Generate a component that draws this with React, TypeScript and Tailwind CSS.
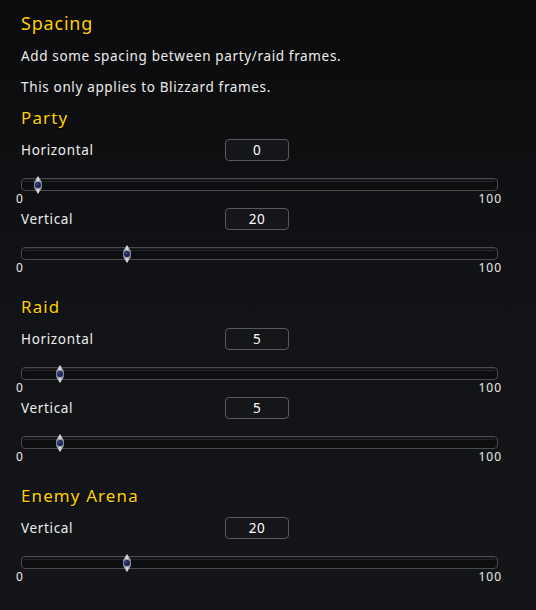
import React from "react";

type Setting = { label: string; value: number };
type Group = { title: string; settings: Setting[] };

const groups: Group[] = [
  {
    title: "Party",
    settings: [
      { label: "Horizontal", value: 0 },
      { label: "Vertical", value: 20 },
    ],
  },
  {
    title: "Raid",
    settings: [
      { label: "Horizontal", value: 5 },
      { label: "Vertical", value: 5 },
    ],
  },
  {
    title: "Enemy Arena",
    settings: [{ label: "Vertical", value: 20 }],
  },
];

function Thumb() {
  return (
    <svg width="10" height="18" viewBox="0 0 10 18">
      <defs>
        <linearGradient id="silver" x1="0" y1="0" x2="1" y2="0">
          <stop offset="0" stopColor="#6c6c70" />
          <stop offset="0.5" stopColor="#e4e4e8" />
          <stop offset="1" stopColor="#6c6c70" />
        </linearGradient>
      </defs>
      <polygon points="5,0 9,6 9,12 5,18 1,12 1,6" fill="url(#silver)" />
      <circle cx="5" cy="9" r="3.6" fill="#1d2752" stroke="#9aa0bc" strokeWidth="0.8" />
      <circle cx="4.3" cy="8.2" r="1" fill="#4b5a9a" />
    </svg>
  );
}

function Slider({ value }: { value: number }) {
  return (
    <div className="mt-[17px]">
      <div className="relative h-[13px] rounded-[4px] border border-[#4a4a4c] bg-[#0d0e10] shadow-[inset_0_1px_0_#1d1e21]">
        <div className="absolute left-[2px] right-[2px] top-[2px] h-px bg-[#26272a]" />
        <div
          className="absolute top-1/2 -translate-x-1/2 -translate-y-1/2"
          style={{ left: `${16 + (value / 100) * 445}px` }}
        >
          <Thumb />
        </div>
      </div>
      <div className="flex justify-between -ml-[5px] -mr-[4px] mt-[1px] text-[12px] leading-[13px] tracking-[1px] text-[#ececec]">
        <span>0</span>
        <span>100</span>
      </div>
    </div>
  );
}

function Row({ setting }: { setting: Setting }) {
  return (
    <div>
      <div className="flex items-center h-[22px]">
        <span className="w-[204px] text-[13.5px] tracking-[0.65px] text-[#ececec]">{setting.label}</span>
        <div className="w-[64px] h-[22px] rounded-[4px] border border-[#59595b] bg-[#15161a] flex items-center justify-center text-[13.5px] tracking-[0.5px] text-white">
          {setting.value}
        </div>
      </div>
      <Slider value={setting.value} />
    </div>
  );
}

export default function App() {
  return (
    <div
      className="w-[536px] h-[610px] overflow-hidden bg-gradient-to-b from-[#0b0b0d] via-[#121316] to-[#141519] pl-[21px] pr-[38px] pt-[11px]"
      style={{ fontFamily: '"Noto Sans", sans-serif' }}
    >
      <h1 className="text-[18px] leading-[24px] tracking-[0.8px] text-[#ffd100] [text-shadow:1px_1px_0_#000]">Spacing</h1>
      <p className="mt-[11px] text-[13.5px] leading-[20px] tracking-[0.65px] text-[#ececec]">
        Add some spacing between party/raid frames.
      </p>
      <p className="mt-[11px] text-[13.5px] leading-[20px] tracking-[0.65px] text-[#ececec]">
        This only applies to Blizzard frames.
      </p>
      {groups.map((g, gi) => (
        <div key={g.title} className={gi === 0 ? "mt-[10px]" : "mt-[22px]"}>
          <h2 className="text-[17px] leading-[22px] tracking-[1.1px] text-[#ffd100] [text-shadow:1px_1px_0_#000]">{g.title}</h2>
          <div className="mt-[10px] flex flex-col gap-[3px]">
            {g.settings.map((s, i) => (
              <Row key={i} setting={s} />
            ))}
          </div>
        </div>
      ))}
    </div>
  );
}
